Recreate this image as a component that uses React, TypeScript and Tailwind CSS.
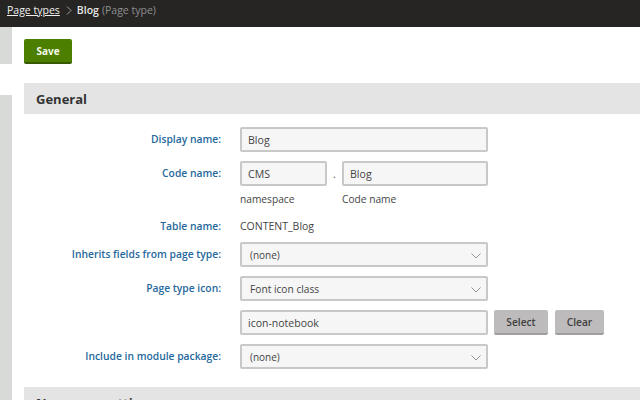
import React from "react";

function Chevron() {
  return (
    <svg width="10" height="6" viewBox="0 0 10 6" className="absolute right-[5px] top-[9px]" fill="none">
      <path d="M0.5 0.5L5 5L9.5 0.5" stroke="#8a8a8a" strokeWidth="0.9" />
    </svg>
  );
}

function Field({ text, w = "w-[248px]", select = false, tx = "pl-[6px]", size = "text-[10.6px]" }: { text: string; w?: string; select?: boolean; tx?: string; size?: string }) {
  return (
    <div className={`relative h-[25px] ${w} shrink-0 rounded-[2px] border-2 border-[#c8c8c8] bg-[#f6f6f6] ${tx} ${size} leading-[22px] text-[#444]`}>
      {text}
      {select && <Chevron />}
    </div>
  );
}

function Label({ text }: { text: string }) {
  return <div className="w-[197px] shrink-0 text-right text-[10.3px] font-semibold leading-[25px] text-[#26689c]">{text}</div>;
}

function Btn({ text, w }: { text: string; w: string }) {
  return (
    <div className={`h-[25px] ${w} rounded-[2px] border-b-2 border-[#a09e9e] bg-[#bdbbbb] text-center text-[10.2px] font-semibold leading-[25px] text-[#404040]`}>{text}</div>
  );
}

function Section({ text, top }: { text: string; top: string }) {
  return <div className={`${top} h-[31px] shrink-0 bg-[#e4e4e4] pl-[12px] text-[13px] font-bold leading-[32px] text-[#333]`}>{text}</div>;
}

export default function App() {
  return (
    <div className="h-[400px] w-[640px] overflow-hidden bg-white font-['Open_Sans','Noto_Sans',sans-serif]">
      <div className="flex h-[27px] items-center gap-[6px] bg-[#262524] pb-[7px] pl-[7px] text-[10.5px] leading-[20px]">
        <span className="text-[#f0f0f0] underline">Page types</span>
        <svg width="6" height="9" viewBox="0 0 6 9" fill="none"><path d="M1 0.5L5 4.5L1 8.5" stroke="#aaa" strokeWidth="0.9" /></svg>
        <span className="-ml-[1px] font-semibold text-[#e6e6e6]">Blog</span>
        <span className="-ml-[3px] text-[#8f8f8f]">(Page type)</span>
      </div>
      <div className="flex h-[373px]">
        <div className="flex w-[12px] shrink-0 flex-col">
          <div className="h-[37px] bg-[#d8dad7]" />
          <div className="h-[31px]" />
          <div className="flex-1 bg-[#d8dad7]" />
        </div>
        <div className="flex min-w-0 flex-1 flex-col pl-[12px]">
          <div className="mt-[12px] h-[25px] w-[48px] rounded-[2px] border-b-2 border-[#355a00] bg-[#4c7f00] text-center text-[10px] font-bold leading-[25px] text-[#f4f8e8]">Save</div>
          <Section text="General" top="mt-[19px]" />
          <div className="mt-[13px] flex flex-col">
            <div className="flex gap-[19px]">
              <Label text="Display name:" />
              <Field text="Blog" />
            </div>
            <div className="mt-[9px] flex gap-[19px]">
              <Label text="Code name:" />
              <div className="flex flex-col">
                <div className="flex">
                  <Field text="CMS" w="w-[87px]" />
                  <div className="h-[25px] w-[15px] pt-[1px] text-center text-[11px] leading-[24px] text-[#555]">.</div>
                  <Field text="Blog" w="w-[146px]" />
                </div>
                <div className="mt-[5px] flex text-[10.2px] leading-[16px] text-[#444]">
                  <div className="w-[102px]">namespace</div>
                  <div>Code name</div>
                </div>
              </div>
            </div>
            <div className="mt-[7px] flex gap-[19px] text-[10.5px] leading-[25px]">
              <Label text="Table name:" />
              <div className="text-[#444]">CONTENT_Blog</div>
            </div>
            <div className="mt-[3px] flex gap-[19px]">
              <Label text="Inherits fields from page type:" />
              <Field text="(none)" select tx="pl-[8px]" size="text-[10px]" />
            </div>
            <div className="mt-[9px] flex gap-[19px]">
              <Label text="Page type icon:" />
              <Field text="Font icon class" select tx="pl-[8px]" size="text-[10.2px]" />
            </div>
            <div className="mt-[9px] flex gap-[19px]">
              <div className="w-[197px] shrink-0" />
              <Field text="icon-notebook" size="text-[10.5px]" />
              <div className="-ml-[13px] flex gap-[7px]">
                <Btn text="Select" w="w-[54px]" />
                <Btn text="Clear" w="w-[49px]" />
              </div>
            </div>
            <div className="mt-[9px] flex gap-[19px]">
              <Label text="Include in module package:" />
              <Field text="(none)" select tx="pl-[8px]" size="text-[10px]" />
            </div>
          </div>
          <Section text="New page settings" top="mt-[18px]" />
        </div>
      </div>
    </div>
  );
}
